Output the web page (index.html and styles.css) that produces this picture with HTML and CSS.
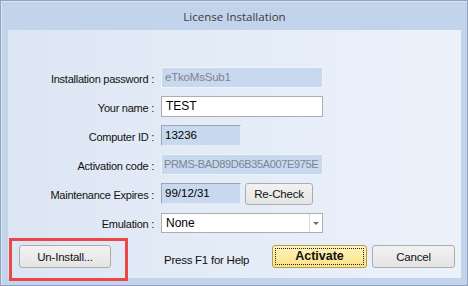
FILE: index.html
```html
<!DOCTYPE html>
<html lang="en">
<head>
    <meta charset="UTF-8">
    <title>License Installation</title>
    <link rel="stylesheet" href="styles.css">
</head>
<body>
    <div class="window">
        <div class="titlebar">License Installation</div>
        <div class="client">
            <div class="form">
                <label>Installation password :</label>
                <div class="field disabled wide">eTkoMsSub1</div>

                <label>Your name :</label>
                <div class="field wide">TEST</div>

                <label>Computer ID :</label>
                <div class="field readonly short">13236</div>

                <label>Activation code :</label>
                <div class="field disabled wide code">PRMS-BAD89D6B35A007E975E</div>

                <label>Maintenance Expires :</label>
                <div class="inline">
                    <div class="field readonly short">99/12/31</div>
                    <button class="btn recheck">Re-Check</button>
                </div>

                <label>Emulation :</label>
                <div class="field combo wide">
                    <span>None</span>
                    <span class="arrow"></span>
                </div>
            </div>

            <div class="actions">
                <button class="btn uninstall">Un-Install...</button>
                <span class="help">Press F1 for Help</span>
                <button class="btn activate"><span>Activate</span></button>
                <button class="btn cancel">Cancel</button>
            </div>
        </div>
        <!-- annotation box around the uninstall button -->
        <div class="highlight"></div>
    </div>
</body>
</html>
```

FILE: styles.css
```css
* {
    margin: 0;
    padding: 0;
    box-sizing: border-box;
}

body {
    width: 468px;
    height: 286px;
    overflow: hidden;
    font-family: 'Liberation Sans', Arial, sans-serif;
    font-size: 11px;
    letter-spacing: -0.25px;
    color: #000;
}

.window {
    position: relative;
    width: 468px;
    height: 286px;
    background: #c1d4ec;
    border: 1px solid #8fa3bd;
    box-shadow: inset 1px 1px 0 #dbe6f4;
    padding: 0 6px 7px 7px;
    display: flex;
    flex-direction: column;
}

.titlebar {
    height: 29px;
    line-height: 31px;
    text-align: center;
    font-family: 'Open Sans', 'Noto Sans', sans-serif;
    font-size: 11.5px;
    letter-spacing: 0;
    color: #3b3b3b;
}

.client {
    flex: 1;
    background: linear-gradient(90deg, #dce6f3 0%, #e4ecf7 50%, #ecf2fc 100%);
    padding: 37px 6px 0 11px;
}

.form {
    display: grid;
    grid-template-columns: 135px 162px;
    grid-auto-rows: 21px;
    column-gap: 7px;
    row-gap: 8px;
    align-items: center;
}

.form label {
    text-align: right;
    color: #111;
    padding-top: 2px;
}

.field {
    height: 21px;
    line-height: 19px;
    padding: 0 4px;
    font-size: 12px;
    letter-spacing: 0;
    white-space: nowrap;
    overflow: hidden;
    background: #fff;
    border: 1px solid #abadb3;
}

.field.wide {
    width: 162px;
}

.field.short {
    width: 80px;
}

.field.disabled {
    background: #c8d8ee;
    border-color: #eef3fa;
    color: #7d8590;
    font-size: 11.5px;
    letter-spacing: -0.2px;
    padding-left: 3px;
}

.field.code {
    font-size: 11px;
    letter-spacing: -0.35px;
    padding-left: 2px;
}

.field.readonly {
    background: #c8d8ee;
    border-color: #9aa6b6 #e6edf7 #e6edf7 #9aa6b6;
    font-size: 11.5px;
    padding-left: 3px;
}

.inline {
    display: flex;
    align-items: center;
    gap: 4px;
}

.combo {
    display: flex;
    justify-content: space-between;
    padding-right: 0;
    height: 20px;
}

.combo .arrow {
    width: 13px;
    border-left: 1px solid #d9dce2;
    position: relative;
}

.combo .arrow::after {
    content: '';
    position: absolute;
    left: 3px;
    top: 8px;
    border-left: 3px solid transparent;
    border-right: 3px solid transparent;
    border-top: 3px solid #6b6b6b;
}

.btn {
    height: 23px;
    font-family: 'Liberation Sans', Arial, sans-serif;
    font-size: 11.5px;
    letter-spacing: -0.2px;
    color: #111;
    background: linear-gradient(#f2f2f2, #e4e4e4);
    border: 1px solid #acacac;
    border-radius: 3px;
}

.recheck {
    width: 68px;
    height: 22px;
}

.actions {
    display: flex;
    align-items: center;
    margin-top: 12px;
}

.uninstall {
    width: 92px;
}

.help {
    margin-left: 53px;
    padding-top: 6px;
    font-size: 11.5px;
    color: #111;
}

.activate {
    margin-left: auto;
    width: 95px;
    padding: 2px;
    font-weight: bold;
    font-size: 12.5px;
    letter-spacing: 0;
    background: linear-gradient(#fdf3bd, #fbe383);
    border-color: #b69c4c;
}

.activate span {
    display: block;
    height: 100%;
    line-height: 15px;
    border: 1px dotted #222;
}

.cancel {
    width: 83px;
    margin-left: 5px;
}

.highlight {
    position: absolute;
    left: 8px;
    top: 237px;
    width: 119px;
    height: 43px;
    border: 3px solid #ea4747;
}
```
